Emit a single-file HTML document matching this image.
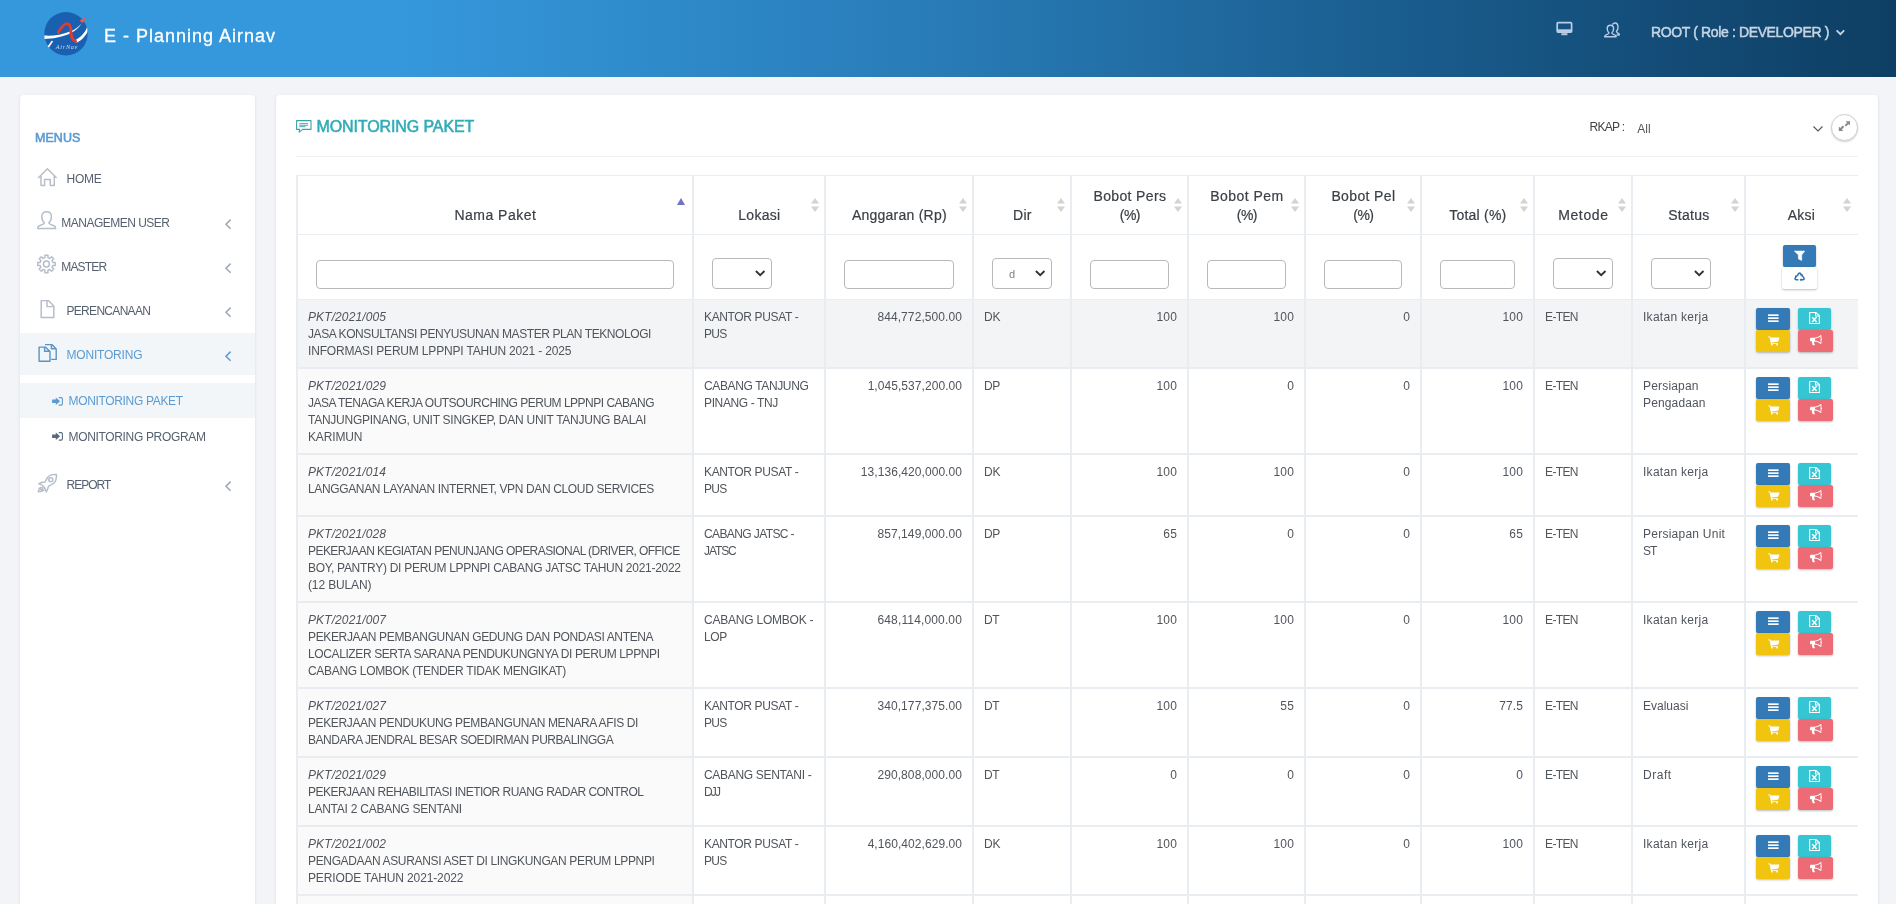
<!DOCTYPE html>
<html>
<head>
<meta charset="utf-8">
<title>E - Planning Airnav</title>
<style>
*{box-sizing:border-box;}
html,body{margin:0;padding:0;}
body{will-change:transform;width:1896px;height:904px;overflow:hidden;background:#f2f4f8;font-family:"Liberation Sans",sans-serif;color:#333;position:relative;}
span{white-space:nowrap;}
.a{position:absolute;white-space:nowrap;}
svg{display:block;overflow:visible;}
/* header */
#hdr{position:absolute;left:0;top:0;width:1896px;height:76.8px;background:linear-gradient(90deg,#3598dc 0%,#3598dc 21%,#287bb6 50%,#195b8c 75%,#0e3e63 100%);}
#brand{left:104px;top:23.7px;font-size:18px;line-height:24px;color:#fff;-webkit-text-stroke:0.3px #fff;}
#user{left:1651px;top:22px;font-size:14px;line-height:20px;font-weight:normal;color:#c6d4e3;-webkit-text-stroke:0.5px #c6d4e3;}
/* sidebar */
#side{position:absolute;left:20px;top:95px;width:235px;height:820px;background:#fff;border-radius:4px;box-shadow:0 1px 3px rgba(190,200,215,.55);}
.m{font-size:12px;line-height:20px;color:#56616f;}
.m.on{color:#5b9bd1;}
.act{position:absolute;left:20px;width:235px;background:#f2f6f9;}
/* card */
#card{position:absolute;left:276px;top:95px;width:1602px;height:820px;background:#fff;border-radius:4px;box-shadow:0 1px 3px rgba(190,200,215,.55);}
#title{left:316.5px;top:116px;font-size:16px;line-height:22px;font-weight:normal;color:#30acb8;-webkit-text-stroke:0.55px #30acb8;}
#hr{position:absolute;left:296px;top:156px;width:1562px;height:1px;background:#eef1f5;}
/* table */
#tw{position:absolute;left:296px;top:175px;width:1562px;height:729px;overflow:hidden;}
table{border-collapse:separate;border-spacing:0;table-layout:fixed;width:1563px;border-top:1px solid #e9ecf1;border-left:2px solid #e9ecf1;}
th,td{border-right:2px solid #e9ecf1;white-space:nowrap;overflow:hidden;}
thead tr.h1 th{height:59px;border-bottom:1px solid #e9ecf1;padding:10px 0 9px 0.8px;vertical-align:bottom;font-size:14px;line-height:19px;font-weight:normal;color:#3b4046;-webkit-text-stroke:0.2px #3b4046;text-align:center;position:relative;}
thead tr.h2 th{height:64px;padding:10px 18px;vertical-align:bottom;position:relative;font-weight:normal;}
tbody td{border-top:1px solid #e9ecf1;border-bottom:1px solid #e9ecf1;font-size:12px;line-height:17.14px;padding:9px 10px 0 10px;vertical-align:top;color:#50555b;}
tbody td.r{text-align:right;}
th:last-child,td:last-child{border-right:0;}
thead tr.h1 th:last-child{padding-right:3px;}
thead tr.h1 th:last-child .so{right:7.6px;}
tbody td.c1{background:#fafafa;}
tbody tr.hov td{background:#f3f4f6;}
.inp{display:block;width:100%;height:29px;border:1px solid #b9b9b9;border-radius:4px;background:#fff;}
.sel{display:block;width:60px;height:31px;border:1px solid #b9b9b9;border-radius:4px;background:#fff;position:relative;}
.sel svg{position:absolute;left:41.6px;top:11.2px;}
.so{position:absolute;right:5.2px;top:22.2px;}
.ak{padding:8px 10px 0 10px !important;font-size:0;line-height:0;}
.b{display:inline-block;vertical-align:top;height:22px;border-radius:2px;position:relative;box-shadow:0 1px 3px rgba(0,0,0,.1),0 1px 2px rgba(0,0,0,.18);}
.b1{width:34px;background:#337ab7;margin-right:8px;}
.b2{width:33px;background:#36c6d3;}
.b3{width:34px;background:#f1c40f;margin-right:8px;}
.b4{width:35px;background:#ed6b75;}
.ic{position:absolute;fill:#fff;}
</style>
</head>
<body>
<svg width="0" height="0" style="position:absolute">
<defs>
<g id="i-bars"><rect x="0" y="0.4" width="11" height="2"/><rect x="0" y="4" width="11" height="2"/><rect x="0" y="7.6" width="11" height="2"/></g>
<g id="i-xls"><path d="M0.6 0.6H7L10.4 4V12.4H0.6Z" fill="none" stroke="#fff" stroke-width="1.2" stroke-linejoin="round"/><path d="M6.6 0.8V4.4H10.2" fill="none" stroke="#fff" stroke-width="1.1"/><path d="M3.2 5.6L7.6 10.8M7.6 5.6L3.2 10.8" stroke="#fff" stroke-width="1.5" fill="none"/></g>
<g id="i-cart"><path d="M0 0.4H2.3L2.8 1.6H11.6C12 1.6 12.1 1.9 12 2.2L11 5.6C10.9 5.9 10.7 6 10.4 6.1L3.9 6.8L4.1 7.6H10.6V8.4H3.2L1.6 1.2H0Z"/><circle cx="4.1" cy="9.2" r="0.95"/><circle cx="9.7" cy="9.2" r="0.95"/></g>
<g id="i-horn"><path d="M11.2 0C11.7 0 12 .4 12 .9V3.7C12.4 3.9 12.6 4.2 12.6 4.7S12.4 5.5 12 5.7V8.5C12 9 11.7 9.4 11.2 9.4C9.3 7.8 7.3 6.9 5 6.7C4.3 6.9 4.1 7.7 4.6 8.2C4.2 8.9 4.6 9.4 5.4 10C5 10.8 3.5 11 2.7 10.4C2.4 9.2 1.8 8.1 2.2 6.6H1C.4 6.6 0 6.2 0 5.6V3.8C0 3.2 .4 2.8 1 2.8H4.2C6.7 2.8 9 1.8 11.2 0ZM11.1 8V1.4C9.3 2.8 7.4 3.6 5.3 3.7V5.7C7.4 5.9 9.3 6.7 11.1 8Z" fill-rule="evenodd"/></g>
<g id="i-chev"><path d="M0.9 1L5.2 5.1L9.5 1" fill="none" stroke="#333" stroke-width="1.9" stroke-linecap="butt"/></g>
<g id="i-sort"><path d="M4 0L8 5.5H0Z"/><path d="M4 14L8 8.5H0Z"/></g>
<g id="i-lt"><path d="M5.6 0.6L1 5.2L5.6 9.8" fill="none" stroke-width="1.5"/></g>
<g id="i-signin"><path d="M3.8 0.6L8.1 4.3L3.8 8V6.1H0.1V2.5H3.8Z" stroke="none"/><path d="M6.8 0.6H9.1Q10.4 0.6 10.4 1.9V6.8Q10.4 8.1 9.1 8.1H6.8" fill="none" stroke-width="1.1"/></g>
</defs>
</svg>
<div id="hdr"></div>
<span class="a" id="brand"><span style="letter-spacing:0.995px">E - Planning Airnav</span></span>
<span class="a" id="user"><span style="letter-spacing:-0.369px">ROOT ( Role : DEVELOPER )</span></span>

<div id="side"></div>
<div class="act" style="top:332.6px;height:42px"></div>
<div class="act" style="top:383.3px;height:34.5px"></div>
<span class="a" style="left:35px;top:128px;font-size:12.5px;line-height:20px;font-weight:normal;color:#5b9bd1;-webkit-text-stroke:0.6px #5b9bd1"><span style="letter-spacing:0.049px">MENUS</span></span>
<span class="a m" style="left:66.5px;top:168.6px"><span style="letter-spacing:-0.259px">HOME</span></span>
<span class="a m" style="left:61.3px;top:212.7px"><span style="letter-spacing:-0.512px">MANAGEMEN USER</span></span>
<span class="a m" style="left:61.3px;top:256.8px"><span style="letter-spacing:-0.839px">MASTER</span></span>
<span class="a m" style="left:66.5px;top:300.6px"><span style="letter-spacing:-0.696px">PERENCANAAN</span></span>
<span class="a m on" style="left:66.5px;top:344.6px"><span style="letter-spacing:-0.196px">MONITORING</span></span>
<span class="a m on" style="left:68.5px;top:390.6px"><span style="letter-spacing:-0.332px">MONITORING PAKET</span></span>
<span class="a m" style="left:68.5px;top:426.5px"><span style="letter-spacing:-0.337px">MONITORING PROGRAM</span></span>
<span class="a m" style="left:66.5px;top:474.8px"><span style="letter-spacing:-0.971px">REPORT</span></span>
<svg class="a" style="left:225px;top:219px;stroke:#9aa7b6" width="7" height="11"><use href="#i-lt"/></svg>
<svg class="a" style="left:225px;top:263px;stroke:#9aa7b6" width="7" height="11"><use href="#i-lt"/></svg>
<svg class="a" style="left:225px;top:307px;stroke:#9aa7b6" width="7" height="11"><use href="#i-lt"/></svg>
<svg class="a" style="left:225px;top:351px;stroke:#5b9bd1" width="7" height="11"><use href="#i-lt"/></svg>
<svg class="a" style="left:225px;top:481px;stroke:#9aa7b6" width="7" height="11"><use href="#i-lt"/></svg>
<svg class="a" style="left:52px;top:396.5px;fill:#5b9bd1;stroke:#5b9bd1" width="11" height="9"><use href="#i-signin"/></svg>
<svg class="a" style="left:52px;top:432.4px;fill:#59697d;stroke:#59697d" width="11" height="9"><use href="#i-signin"/></svg>

<div id="card"></div>
<span class="a" id="title"><span style="letter-spacing:-0.108px">MONITORING PAKET</span></span>
<div id="hr"></div>
<span class="a" style="left:1589.5px;top:117px;font-size:12px;line-height:20px;color:#444"><span style="letter-spacing:-0.690px">RKAP :</span></span>
<span class="a" style="left:1637.3px;top:119px;font-size:12px;line-height:20px;color:#555">All</span>
<svg class="a" style="left:1812.5px;top:126px" width="10" height="6" viewBox="0 0 10 6"><path d="M0.5 0.5L5 5L9.5 0.5" fill="none" stroke="#555" stroke-width="1.1"/></svg>
<div class="a" style="left:1831px;top:114px;width:27px;height:27px;border-radius:50%;border:1px solid #cfcfcf;background:#fff;box-shadow:0 1px 2px rgba(0,0,0,.18)"></div>

<!--OVERLAY--><svg class="a" style="left:0;top:0" width="1896" height="904" viewBox="0 0 1896 904">
<!-- logo -->
<g>
<circle cx="66" cy="33.7" r="21.7" fill="#1a60b0"/>
<path d="M44.3 35.6C52 36.2 62 35 70 31.6C75 29.4 79 26.4 81.5 23.4C79 27.5 75.5 30.8 70.5 33.2C62 37.2 52 38.8 44.6 38.9Z" fill="#fff"/>
<path d="M75 40.4C80 38 84.5 33.5 87 27.6C87.6 29.3 87.6 30.8 87.3 32.2C84.6 37.4 80.3 41.2 76 42.8Z" fill="#fff"/>
<path d="M47.6 46.6L51.6 40.8L53.2 41.2L49 47.4Z" fill="#fff"/>
<path d="M58.4 32.4C61 27.5 64 23.6 67.4 23.6C70.4 23.8 70.8 28.5 70.9 32C71 36 72 40 75.6 41.4" fill="none" stroke="#e23b30" stroke-width="2.9" stroke-linecap="round"/>
<path d="M79.8 20.2L85.4 17.6L84 22L81.6 22.8Z" fill="#ea5a50"/>
<text x="55.8" y="49" font-family="Liberation Serif" font-style="italic" font-size="6.2" fill="#cfdcef" textLength="21.5">AirNav</text>
</g>
<!-- header icons -->
<g fill="none" stroke="#b9cde8" stroke-width="1.7" stroke-linejoin="round">
<rect x="1557.2" y="22.7" width="14.4" height="9.4" rx="0.8"/>
<path d="M1557.2 30.6H1571.6" stroke-width="2.6"/>
<path d="M1561.4 34.2H1567.4" stroke-width="2"/>
</g>
<g fill="none" stroke="#b9cde8" stroke-width="1.4" stroke-linejoin="round">
<path d="M1612.4 24.6C1613 23.6 1614 23 1615 23C1617 23 1618 24.8 1618 27.2C1618 29 1617.4 30.6 1616.4 31.6C1616.4 32.4 1617 32.8 1619.2 33.8V35H1616.4"/>
<path d="M1608.9 32.8C1607.6 31.6 1607.2 30 1607.2 28.6C1607.2 26.6 1608.4 25.2 1610.4 25.2C1612.4 25.2 1613.6 26.6 1613.6 28.6C1613.6 30 1613.2 31.6 1611.9 32.8C1611.8 33.6 1612.4 34 1613.6 34.4C1615.4 35 1616.2 35.4 1616.2 36.7H1604.6C1604.6 35.4 1605.4 35 1607.2 34.4C1608.4 34 1609 33.6 1608.9 32.8Z"/>
</g>
<path d="M1836.6 30.4L1840.4 34.2L1844.2 30.4" fill="none" stroke="#c6d4e3" stroke-width="1.8"/>
<!-- sidebar icons -->
<g fill="none" stroke="#b5bdc9" stroke-width="1.45" stroke-linejoin="round" stroke-linecap="round">
<path d="M38.7 177.4L47.4 168.8L56.2 177.4M41 176V185.5H44.6V179.4H50.3V185.5H54.3V176"/>
<path d="M44.3 222.6C42 221 41.8 218.5 41.8 216.6C41.8 213.4 43.8 211.7 46.6 211.7C49.4 211.7 51.4 213.4 51.4 216.6C51.4 218.5 51.2 221 48.9 222.6C48.5 223.6 49.5 224 51 224.6L54.5 226C55.5 226.5 55.6 227.5 55.6 228.4H37.7C37.7 227.5 37.8 226.5 38.8 226L42.2 224.6C43.7 224 44.7 223.6 44.3 222.6Z"/>
<path d="M44.90 255.19 L48.00 255.19 L47.97 257.63 L49.85 258.41 L51.55 256.66 L53.74 258.85 L51.99 260.55 L52.77 262.43 L55.21 262.40 L55.21 265.50 L52.77 265.47 L51.99 267.35 L53.74 269.05 L51.55 271.24 L49.85 269.49 L47.97 270.27 L48.00 272.71 L44.90 272.71 L44.93 270.27 L43.05 269.49 L41.35 271.24 L39.16 269.05 L40.91 267.35 L40.13 265.47 L37.69 265.50 L37.69 262.40 L40.13 262.43 L40.91 260.55 L39.16 258.85 L41.35 256.66 L43.05 258.41 L44.93 257.63Z"/>
<circle cx="46.45" cy="263.95" r="3"/>
<path d="M41.2 300.6H48.4L53.8 306V317.5H41.2ZM47 300.6V306.6H53.8"/>
<path d="M56.4 474.4C52 474.3 49.2 475.2 47.6 477.5C46.4 479.2 45.6 481 44.9 482C42.5 482 40.5 482.6 38.8 483.9C41.5 484.5 43 485.5 44 487C45 488.5 45.8 490 46.3 491.9C47.5 490 48.2 488 48.4 486.3C50 485.5 52.5 484.5 54.2 482.8C56 481 56.6 478 56.4 474.4Z"/>
<circle cx="50.8" cy="479.7" r="2"/>
<path d="M38.4 491.7C38.6 489.2 39.6 487.4 41.4 487.4C43 487.4 43.4 489.2 42 489.8C41.2 490.1 40.6 489.6 40.9 489M38.4 491.7C40.4 491.6 42.6 491.2 44 490.2"/>
</g>
<g fill="none" stroke="#5b93c7" stroke-width="1.4" stroke-linejoin="round">
<path d="M39.1 347.1H45.3L50 351.6V361.3H39.1ZM44.6 347.1V351.2H50"/>
<path d="M45 344.6H51.9L56.2 349V359.4H51.2M51.4 344.6V348.8H56.2"/>
</g>
<!-- title icon -->
<g fill="none" stroke="#3aa3ad" stroke-width="1.1">
<path d="M296.6 120.6H311V129.4H302.6L299.2 132.2L299.6 129.4H296.6Z" stroke-linejoin="round"/>
<path d="M299.3 123.6H308.1M299.3 125.3H308.1M299.3 126.7H305.5" stroke-width="0.9"/>
</g>
<!-- expand icon -->
<g fill="#8a8a8a" stroke="none">
<path d="M1850 121.2V125.6L1848.5 124.1L1846 126.6L1844.6 125.2L1847.1 122.7L1845.6 121.2Z"/>
<path d="M1838.8 131V126.6L1840.3 128.1L1842.8 125.6L1844.2 127L1841.7 129.5L1843.2 131Z"/>
</g>
</svg><!--/OVERLAY-->
<div id="tw">
<table>
<colgroup><col style="width:396px"><col style="width:132px"><col style="width:148px"><col style="width:98px"><col style="width:117px"><col style="width:117px"><col style="width:116px"><col style="width:113px"><col style="width:98px"><col style="width:113px"><col style="width:113px"></colgroup>
<thead>
<tr class="h1">
<th><span style="letter-spacing:0.495px">Nama Paket</span><svg class="so" style="top:21.6px;right:7px" width="8" height="7" viewBox="0 0 8 7"><path d="M4 0L8 7H0Z" fill="#6f74c4"/></svg></th>
<th><span style="letter-spacing:0.305px">Lokasi</span><svg class="so" width="8" height="14" fill="#d3d3d3"><use href="#i-sort"/></svg></th>
<th><span style="letter-spacing:0.229px">Anggaran (Rp)</span><svg class="so" width="8" height="14" fill="#d3d3d3"><use href="#i-sort"/></svg></th>
<th><span style="letter-spacing:0.303px">Dir</span><svg class="so" width="8" height="14" fill="#d3d3d3"><use href="#i-sort"/></svg></th>
<th><span style="letter-spacing:0.343px">Bobot Pers</span><br><span style="letter-spacing:-0.506px">(%)</span><svg class="so" width="8" height="14" fill="#d3d3d3"><use href="#i-sort"/></svg></th>
<th><span style="letter-spacing:0.459px">Bobot Pem</span><br><span style="letter-spacing:-0.506px">(%)</span><svg class="so" width="8" height="14" fill="#d3d3d3"><use href="#i-sort"/></svg></th>
<th><span style="letter-spacing:0.365px">Bobot Pel</span><br><span style="letter-spacing:-0.506px">(%)</span><svg class="so" width="8" height="14" fill="#d3d3d3"><use href="#i-sort"/></svg></th>
<th><span style="letter-spacing:0.212px">Total (%)</span><svg class="so" width="8" height="14" fill="#d3d3d3"><use href="#i-sort"/></svg></th>
<th><span style="letter-spacing:0.633px">Metode</span><svg class="so" width="8" height="14" fill="#d3d3d3"><use href="#i-sort"/></svg></th>
<th><span style="letter-spacing:0.299px">Status</span><svg class="so" width="8" height="14" fill="#d3d3d3"><use href="#i-sort"/></svg></th>
<th><span style="letter-spacing:0.212px">Aksi</span><svg class="so" width="8" height="14" fill="#d3d3d3"><use href="#i-sort"/></svg></th>
</tr>
<tr class="h2">
<th><span class="inp"></span></th>
<th><span class="sel"><svg width="11" height="7"><use href="#i-chev"/></svg></span></th>
<th><span class="inp"></span></th>
<th><span class="sel"><span class="a" style="left:16px;top:7px;font-size:11px;line-height:16px;color:#808080">d</span><svg width="11" height="7"><use href="#i-chev"/></svg></span></th>
<th><span class="inp"></span></th>
<th><span class="inp"></span></th>
<th><span class="inp"></span></th>
<th><span class="inp"></span></th>
<th><span class="sel"><svg width="11" height="7"><use href="#i-chev"/></svg></span></th>
<th><span class="sel"><svg width="11" height="7"><use href="#i-chev"/></svg></span></th>
<th style="padding:0"><span class="a" style="left:37px;top:10px;width:33px;height:22px;background:#337ab7;border-radius:2px;box-shadow:0 1px 3px rgba(0,0,0,.1),0 1px 2px rgba(0,0,0,.18)"><svg width="33" height="22"><path d="M11.4 6.1H21.7L18.7 9.9V15.4L15.4 13.9V9.9Z" fill="#fff" stroke="#fff" stroke-width="0.6" stroke-linejoin="round"/></svg></span><span class="a" style="left:36px;top:32px;width:35px;height:22px;background:#fff;border-radius:2px;box-shadow:0 1px 3px rgba(0,0,0,.1),0 1px 2px rgba(0,0,0,.18)"><svg width="35" height="22"><g transform="translate(17.6 9.7) scale(0.87) translate(-17.6 -9.9)"><g fill="none" stroke="#2f72b3" stroke-width="1.8" stroke-linejoin="round"><path d="M14.9 8.9L16.6 6.2Q17.6 5 18.6 6.2L20.3 8.9"/><path d="M21.4 9.6L22.6 11.6Q23.1 13.3 21.4 13.5H19"/><path d="M13.8 9.6L12.6 11.6Q12.1 13.3 13.8 13.5H16.2"/></g><g fill="#2f72b3"><path d="M18.4 8.2L21.8 7.2L21.2 10.4Z"/><path d="M19.6 11.6V15.4L17.6 13.5Z"/><path d="M12 10.6L13.2 7.8L15.6 9.8Z"/></g></g></svg></span></th>
</tr>
</thead>
<tbody id="tb">
  <tr class="hov" style="height:69px">
    <td class="c1"><i><span style="letter-spacing:0.105px">PKT/2021/005</span></i><br><span style="letter-spacing:-0.416px">JASA KONSULTANSI PENYUSUNAN MASTER PLAN TEKNOLOGI</span><br><span style="letter-spacing:-0.177px">INFORMASI PERUM LPPNPI TAHUN 2021 - 2025</span></td>
    <td><span style="letter-spacing:-0.363px">KANTOR PUSAT -</span><br><span style="letter-spacing:-0.714px">PUS</span></td>
    <td class="r"><span style="letter-spacing:0.081px">844,772,500.00</span></td><td><span style="letter-spacing:-0.279px">DK</span></td><td class="r"><span style="letter-spacing:0.184px">100</span></td><td class="r"><span style="letter-spacing:0.184px">100</span></td><td class="r"><span style="letter-spacing:0.174px">0</span></td><td class="r"><span style="letter-spacing:0.184px">100</span></td><td><span style="letter-spacing:-0.621px">E-TEN</span></td>
    <td><span style="letter-spacing:0.275px">Ikatan kerja</span></td>
    <td class="ak"><span class="b b1"><svg class="ic" style="left:11.6px;top:5.8px" width="10.6" height="8.3" viewBox="0 0 11 10" preserveAspectRatio="none"><use href="#i-bars"/></svg></span><span class="b b2"><svg class="ic" style="left:11px;top:4px" width="11" height="12" viewBox="0 0 11 13" preserveAspectRatio="none"><use href="#i-xls"/></svg></span><br><span class="b b3"><svg class="ic" style="left:11.6px;top:5.6px" width="11.3" height="9.4" viewBox="0 0 12 10" preserveAspectRatio="none"><use href="#i-cart"/></svg></span><span class="b b4"><svg class="ic" style="left:11.6px;top:5px" width="11.9" height="10.6" viewBox="0 0 12.5 11" preserveAspectRatio="none"><use href="#i-horn"/></svg></span></td>
  </tr>
  <tr style="height:86px">
    <td class="c1"><i><span style="letter-spacing:0.105px">PKT/2021/029</span></i><br><span style="letter-spacing:-0.502px">JASA TENAGA KERJA OUTSOURCHING PERUM LPPNPI CABANG</span><br><span style="letter-spacing:-0.249px">TANJUNGPINANG, UNIT SINGKEP, DAN UNIT TANJUNG BALAI</span><br><span style="letter-spacing:-0.143px">KARIMUN</span></td>
    <td><span style="letter-spacing:-0.367px">CABANG TANJUNG</span><br><span style="letter-spacing:-0.373px">PINANG - TNJ</span></td>
    <td class="r"><span style="letter-spacing:0.058px">1,045,537,200.00</span></td><td><span style="letter-spacing:-0.350px">DP</span></td><td class="r"><span style="letter-spacing:0.184px">100</span></td><td class="r"><span style="letter-spacing:0.174px">0</span></td><td class="r"><span style="letter-spacing:0.174px">0</span></td><td class="r"><span style="letter-spacing:0.184px">100</span></td><td><span style="letter-spacing:-0.621px">E-TEN</span></td>
    <td><span style="letter-spacing:0.182px">Persiapan</span><br><span style="letter-spacing:0.137px">Pengadaan</span></td>
    <td class="ak"><span class="b b1"><svg class="ic" style="left:11.6px;top:5.8px" width="10.6" height="8.3" viewBox="0 0 11 10" preserveAspectRatio="none"><use href="#i-bars"/></svg></span><span class="b b2"><svg class="ic" style="left:11px;top:4px" width="11" height="12" viewBox="0 0 11 13" preserveAspectRatio="none"><use href="#i-xls"/></svg></span><br><span class="b b3"><svg class="ic" style="left:11.6px;top:5.6px" width="11.3" height="9.4" viewBox="0 0 12 10" preserveAspectRatio="none"><use href="#i-cart"/></svg></span><span class="b b4"><svg class="ic" style="left:11.6px;top:5px" width="11.9" height="10.6" viewBox="0 0 12.5 11" preserveAspectRatio="none"><use href="#i-horn"/></svg></span></td>
  </tr>
  <tr style="height:62px">
    <td class="c1"><i><span style="letter-spacing:0.105px">PKT/2021/014</span></i><br><span style="letter-spacing:-0.362px">LANGGANAN LAYANAN INTERNET, VPN DAN CLOUD SERVICES</span></td>
    <td><span style="letter-spacing:-0.363px">KANTOR PUSAT -</span><br><span style="letter-spacing:-0.714px">PUS</span></td>
    <td class="r"><span style="letter-spacing:0.065px">13,136,420,000.00</span></td><td><span style="letter-spacing:-0.279px">DK</span></td><td class="r"><span style="letter-spacing:0.184px">100</span></td><td class="r"><span style="letter-spacing:0.184px">100</span></td><td class="r"><span style="letter-spacing:0.174px">0</span></td><td class="r"><span style="letter-spacing:0.184px">100</span></td><td><span style="letter-spacing:-0.621px">E-TEN</span></td>
    <td><span style="letter-spacing:0.275px">Ikatan kerja</span></td>
    <td class="ak"><span class="b b1"><svg class="ic" style="left:11.6px;top:5.8px" width="10.6" height="8.3" viewBox="0 0 11 10" preserveAspectRatio="none"><use href="#i-bars"/></svg></span><span class="b b2"><svg class="ic" style="left:11px;top:4px" width="11" height="12" viewBox="0 0 11 13" preserveAspectRatio="none"><use href="#i-xls"/></svg></span><br><span class="b b3"><svg class="ic" style="left:11.6px;top:5.6px" width="11.3" height="9.4" viewBox="0 0 12 10" preserveAspectRatio="none"><use href="#i-cart"/></svg></span><span class="b b4"><svg class="ic" style="left:11.6px;top:5px" width="11.9" height="10.6" viewBox="0 0 12.5 11" preserveAspectRatio="none"><use href="#i-horn"/></svg></span></td>
  </tr>
  <tr style="height:86px">
    <td class="c1"><i><span style="letter-spacing:0.105px">PKT/2021/028</span></i><br><span style="letter-spacing:-0.563px">PEKERJAAN KEGIATAN PENUNJANG OPERASIONAL (DRIVER, OFFICE</span><br><span style="letter-spacing:-0.282px">BOY, PANTRY) DI PERUM LPPNPI CABANG JATSC TAHUN 2021-2022</span><br><span style="letter-spacing:-0.137px">(12 BULAN)</span></td>
    <td><span style="letter-spacing:-0.604px">CABANG JATSC -</span><br><span style="letter-spacing:-1.106px">JATSC</span></td>
    <td class="r"><span style="letter-spacing:0.081px">857,149,000.00</span></td><td><span style="letter-spacing:-0.350px">DP</span></td><td class="r"><span style="letter-spacing:0.182px">65</span></td><td class="r"><span style="letter-spacing:0.174px">0</span></td><td class="r"><span style="letter-spacing:0.174px">0</span></td><td class="r"><span style="letter-spacing:0.182px">65</span></td><td><span style="letter-spacing:-0.621px">E-TEN</span></td>
    <td><span style="letter-spacing:0.247px">Persiapan Unit</span><br><span style="letter-spacing:-1.060px">ST</span></td>
    <td class="ak"><span class="b b1"><svg class="ic" style="left:11.6px;top:5.8px" width="10.6" height="8.3" viewBox="0 0 11 10" preserveAspectRatio="none"><use href="#i-bars"/></svg></span><span class="b b2"><svg class="ic" style="left:11px;top:4px" width="11" height="12" viewBox="0 0 11 13" preserveAspectRatio="none"><use href="#i-xls"/></svg></span><br><span class="b b3"><svg class="ic" style="left:11.6px;top:5.6px" width="11.3" height="9.4" viewBox="0 0 12 10" preserveAspectRatio="none"><use href="#i-cart"/></svg></span><span class="b b4"><svg class="ic" style="left:11.6px;top:5px" width="11.9" height="10.6" viewBox="0 0 12.5 11" preserveAspectRatio="none"><use href="#i-horn"/></svg></span></td>
  </tr>
  <tr style="height:86px">
    <td class="c1"><i><span style="letter-spacing:0.105px">PKT/2021/007</span></i><br><span style="letter-spacing:-0.358px">PEKERJAAN PEMBANGUNAN GEDUNG DAN PONDASI ANTENA</span><br><span style="letter-spacing:-0.388px">LOCALIZER SERTA SARANA PENDUKUNGNYA DI PERUM LPPNPI</span><br><span style="letter-spacing:-0.316px">CABANG LOMBOK (TENDER TIDAK MENGIKAT)</span></td>
    <td><span style="letter-spacing:-0.225px">CABANG LOMBOK -</span><br><span style="letter-spacing:-0.406px">LOP</span></td>
    <td class="r"><span style="letter-spacing:0.144px">648,114,000.00</span></td><td><span style="letter-spacing:-0.307px">DT</span></td><td class="r"><span style="letter-spacing:0.184px">100</span></td><td class="r"><span style="letter-spacing:0.184px">100</span></td><td class="r"><span style="letter-spacing:0.174px">0</span></td><td class="r"><span style="letter-spacing:0.184px">100</span></td><td><span style="letter-spacing:-0.621px">E-TEN</span></td>
    <td><span style="letter-spacing:0.275px">Ikatan kerja</span></td>
    <td class="ak"><span class="b b1"><svg class="ic" style="left:11.6px;top:5.8px" width="10.6" height="8.3" viewBox="0 0 11 10" preserveAspectRatio="none"><use href="#i-bars"/></svg></span><span class="b b2"><svg class="ic" style="left:11px;top:4px" width="11" height="12" viewBox="0 0 11 13" preserveAspectRatio="none"><use href="#i-xls"/></svg></span><br><span class="b b3"><svg class="ic" style="left:11.6px;top:5.6px" width="11.3" height="9.4" viewBox="0 0 12 10" preserveAspectRatio="none"><use href="#i-cart"/></svg></span><span class="b b4"><svg class="ic" style="left:11.6px;top:5px" width="11.9" height="10.6" viewBox="0 0 12.5 11" preserveAspectRatio="none"><use href="#i-horn"/></svg></span></td>
  </tr>
  <tr style="height:69px">
    <td class="c1"><i><span style="letter-spacing:0.105px">PKT/2021/027</span></i><br><span style="letter-spacing:-0.379px">PEKERJAAN PENDUKUNG PEMBANGUNAN MENARA AFIS DI</span><br><span style="letter-spacing:-0.459px">BANDARA JENDRAL BESAR SOEDIRMAN PURBALINGGA</span></td>
    <td><span style="letter-spacing:-0.363px">KANTOR PUSAT -</span><br><span style="letter-spacing:-0.714px">PUS</span></td>
    <td class="r"><span style="letter-spacing:0.081px">340,177,375.00</span></td><td><span style="letter-spacing:-0.307px">DT</span></td><td class="r"><span style="letter-spacing:0.184px">100</span></td><td class="r"><span style="letter-spacing:0.182px">55</span></td><td class="r"><span style="letter-spacing:0.174px">0</span></td><td class="r"><span style="letter-spacing:0.104px">77.5</span></td><td><span style="letter-spacing:-0.621px">E-TEN</span></td>
    <td><span style="letter-spacing:-0.008px">Evaluasi</span></td>
    <td class="ak"><span class="b b1"><svg class="ic" style="left:11.6px;top:5.8px" width="10.6" height="8.3" viewBox="0 0 11 10" preserveAspectRatio="none"><use href="#i-bars"/></svg></span><span class="b b2"><svg class="ic" style="left:11px;top:4px" width="11" height="12" viewBox="0 0 11 13" preserveAspectRatio="none"><use href="#i-xls"/></svg></span><br><span class="b b3"><svg class="ic" style="left:11.6px;top:5.6px" width="11.3" height="9.4" viewBox="0 0 12 10" preserveAspectRatio="none"><use href="#i-cart"/></svg></span><span class="b b4"><svg class="ic" style="left:11.6px;top:5px" width="11.9" height="10.6" viewBox="0 0 12.5 11" preserveAspectRatio="none"><use href="#i-horn"/></svg></span></td>
  </tr>
  <tr style="height:69px">
    <td class="c1"><i><span style="letter-spacing:0.105px">PKT/2021/029</span></i><br><span style="letter-spacing:-0.514px">PEKERJAAN REHABILITASI INETIOR RUANG RADAR CONTROL</span><br><span style="letter-spacing:-0.247px">LANTAI 2 CABANG SENTANI</span></td>
    <td><span style="letter-spacing:-0.320px">CABANG SENTANI -</span><br><span style="letter-spacing:-1.838px">DJJ</span></td>
    <td class="r"><span style="letter-spacing:0.081px">290,808,000.00</span></td><td><span style="letter-spacing:-0.307px">DT</span></td><td class="r"><span style="letter-spacing:0.174px">0</span></td><td class="r"><span style="letter-spacing:0.174px">0</span></td><td class="r"><span style="letter-spacing:0.174px">0</span></td><td class="r"><span style="letter-spacing:0.174px">0</span></td><td><span style="letter-spacing:-0.621px">E-TEN</span></td>
    <td><span style="letter-spacing:0.521px">Draft</span></td>
    <td class="ak"><span class="b b1"><svg class="ic" style="left:11.6px;top:5.8px" width="10.6" height="8.3" viewBox="0 0 11 10" preserveAspectRatio="none"><use href="#i-bars"/></svg></span><span class="b b2"><svg class="ic" style="left:11px;top:4px" width="11" height="12" viewBox="0 0 11 13" preserveAspectRatio="none"><use href="#i-xls"/></svg></span><br><span class="b b3"><svg class="ic" style="left:11.6px;top:5.6px" width="11.3" height="9.4" viewBox="0 0 12 10" preserveAspectRatio="none"><use href="#i-cart"/></svg></span><span class="b b4"><svg class="ic" style="left:11.6px;top:5px" width="11.9" height="10.6" viewBox="0 0 12.5 11" preserveAspectRatio="none"><use href="#i-horn"/></svg></span></td>
  </tr>
  <tr style="height:69px">
    <td class="c1"><i><span style="letter-spacing:0.105px">PKT/2021/002</span></i><br><span style="letter-spacing:-0.347px">PENGADAAN ASURANSI ASET DI LINGKUNGAN PERUM LPPNPI</span><br><span style="letter-spacing:-0.131px">PERIODE TAHUN 2021-2022</span></td>
    <td><span style="letter-spacing:-0.363px">KANTOR PUSAT -</span><br><span style="letter-spacing:-0.714px">PUS</span></td>
    <td class="r"><span style="letter-spacing:0.058px">4,160,402,629.00</span></td><td><span style="letter-spacing:-0.279px">DK</span></td><td class="r"><span style="letter-spacing:0.184px">100</span></td><td class="r"><span style="letter-spacing:0.184px">100</span></td><td class="r"><span style="letter-spacing:0.174px">0</span></td><td class="r"><span style="letter-spacing:0.184px">100</span></td><td><span style="letter-spacing:-0.621px">E-TEN</span></td>
    <td><span style="letter-spacing:0.275px">Ikatan kerja</span></td>
    <td class="ak"><span class="b b1"><svg class="ic" style="left:11.6px;top:5.8px" width="10.6" height="8.3" viewBox="0 0 11 10" preserveAspectRatio="none"><use href="#i-bars"/></svg></span><span class="b b2"><svg class="ic" style="left:11px;top:4px" width="11" height="12" viewBox="0 0 11 13" preserveAspectRatio="none"><use href="#i-xls"/></svg></span><br><span class="b b3"><svg class="ic" style="left:11.6px;top:5.6px" width="11.3" height="9.4" viewBox="0 0 12 10" preserveAspectRatio="none"><use href="#i-cart"/></svg></span><span class="b b4"><svg class="ic" style="left:11.6px;top:5px" width="11.9" height="10.6" viewBox="0 0 12.5 11" preserveAspectRatio="none"><use href="#i-horn"/></svg></span></td>
  </tr>
  <tr style="height:69px">
    <td class="c1"></td>
    <td></td>
    <td></td>    <td></td>    <td></td>    <td></td>    <td></td>    <td></td>    <td></td>
    <td></td>
    <td class="ak"></td>
  </tr>
</tbody>
</table>
</div>
</body>
</html>
